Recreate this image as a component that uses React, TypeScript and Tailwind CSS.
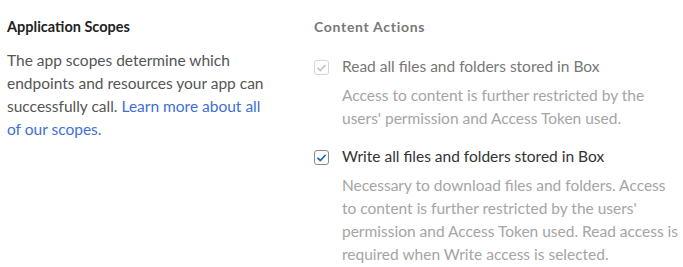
import React from "react";

function Check({ disabled }: { disabled?: boolean }) {
  return (
    <span
      className={
        "mt-[1px] flex h-[15px] w-[15px] shrink-0 items-center justify-center rounded-[3px] border bg-white " +
        (disabled ? "border-[#d5d5d5]" : "border-[#8a8a8a]")
      }
    >
      <svg width="9" height="8" viewBox="0 0 9 8">
        <path
          d="M1 4.3 L3.4 6.5 L8 1.5"
          fill="none"
          stroke={disabled ? "#c4c4c4" : "#1d63c9"}
          strokeWidth="1.8"
          strokeLinecap="round"
          strokeLinejoin="round"
        />
      </svg>
    </span>
  );
}

export default function App() {
  return (
    <div
      className="flex h-[267px] w-[683px] bg-white text-[15.5px]"
      style={{ fontFamily: "Lato, 'Open Sans', sans-serif" }}
    >
      <div className="w-[314px] shrink-0 pl-[7px] pt-[17px]">
        <h2 className="text-[14.5px] font-bold leading-[20px] text-[#222]">Application Scopes</h2>
        <p className="mt-[12px] w-[268px] leading-[23px] text-[#555]">
          The app scopes determine which endpoints and resources your app can
          successfully call.{" "}
          <a className="text-[#3e6fd4]">Learn more about all of our scopes.</a>
        </p>
      </div>
      <div className="flex-1 pt-[17px]">
        <h2 className="text-[14px] font-bold leading-[20px] tracking-[0.7px] text-[#777]">Content Actions</h2>
        <div className="mt-[22px] flex gap-[13px]">
          <Check disabled />
          <div>
            <div className="leading-[14px] text-[#777]">
              Read all files and folders stored in Box
            </div>
            <div className="mt-[11px] w-[341px] leading-[23px] text-[#a5a5a5]">
              Access to content is further restricted by the users' permission
              and Access Token used.
            </div>
          </div>
        </div>
        <div className="mt-[19px] flex gap-[13px]">
          <Check />
          <div>
            <div className="leading-[14px] text-[#333]">
              Write all files and folders stored in Box
            </div>
            <div className="mt-[11px] w-[341px] leading-[23px] text-[#a5a5a5]">
              Necessary to download files and folders. Access to content is
              further restricted by the users' permission and Access Token
              used. Read access is required when Write access is selected.
            </div>
          </div>
        </div>
      </div>
    </div>
  );
}
